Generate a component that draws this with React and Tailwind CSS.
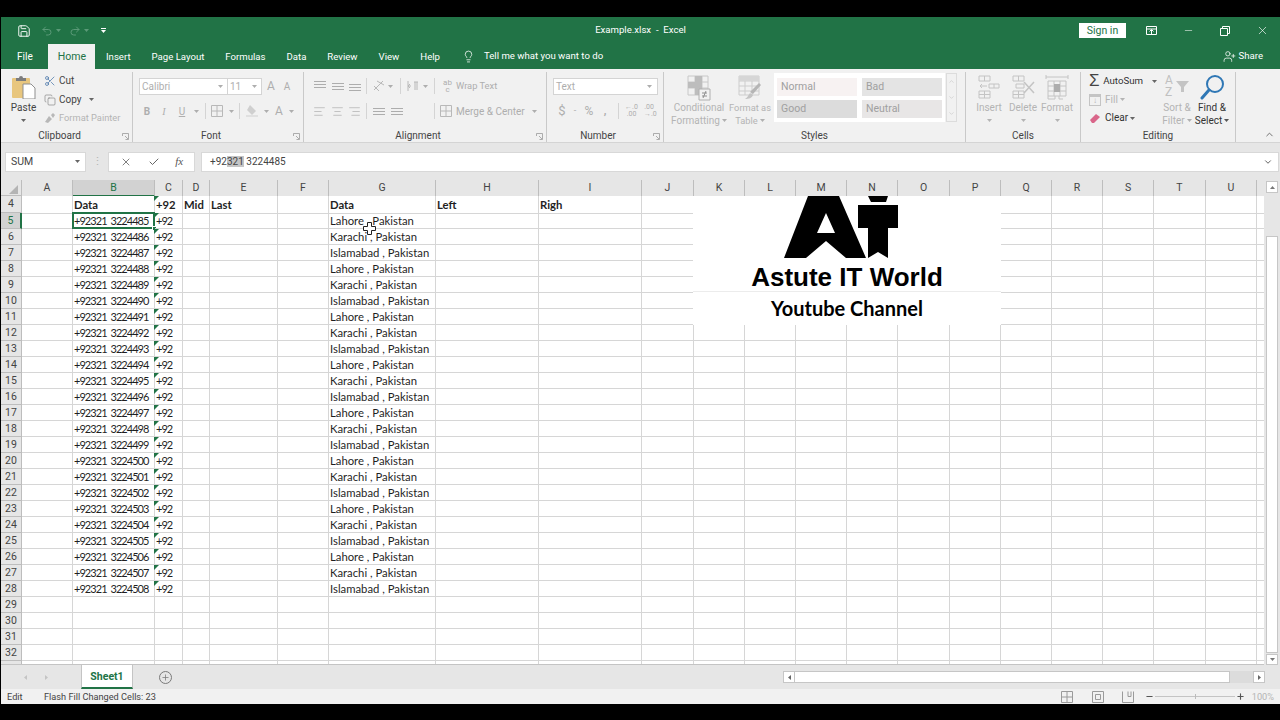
import React from "react";
import {
  AlignCenter, AlignLeft, AlignRight, ChevronDown, ChevronUp, Copy, Minus, Plus, Save, Scissors,
  Undo2, Redo2, X, Check, Lightbulb, UserPlus,
} from "lucide-react";

const UI = "font-['Roboto','Noto_Sans',sans-serif]";
const CELL = "font-['Lato','Open_Sans',sans-serif]";

const columns = ["A", "B", "C", "D", "E", "F", "G", "H", "I", "J", "K", "L", "M", "N", "O", "P", "Q", "R", "S", "T", "U"];
const gridTemplate = "grid grid-cols-[51px_82px_28px_27px_68px_51px_107px_103px_103px_52px_51px_51px_51px_51px_52px_51px_51px_51px_51px_52px_51px_8px]";
const cities = ["Lahore , Pakistan", "Karachi , Pakistan", "Islamabad , Pakistan"];

const Caret = ({ className = "" }) => (
  <svg width="5" height="3" viewBox="0 0 5 3" className={"shrink-0 fill-current " + className}><path d="M0 0h5L2.500 3z" /></svg>
);

const Launcher = () => (
  <svg width="7" height="7" viewBox="0 0 7 7" className="absolute right-[3px] bottom-[2px] stroke-[#9a9a9a] fill-none">
    <path d="M.5 3V.5H6.500V6.500H3.500M3 3l3 3" strokeWidth="0.8" />
  </svg>
);

const Group = ({ label, width, children, launcher }) => (
  <div style={{ width }} className="relative h-full shrink-0 border-r border-[#c9c9c9] flex flex-col">
    <div className="h-[58px] flex">{children}</div>
    <div className={"h-[12px] text-center text-[10px] leading-[12px] text-[#444] " + (launcher ? "pr-[14px]" : "")}>{label}</div>
    {launcher && <Launcher />}
  </div>
);

const GridIcon = ({ className = "" }) => (
  <svg width="12" height="12" viewBox="0 0 12 12" className={"shrink-0 fill-none stroke-[#b8b8b8] " + className}>
    <path d="M.5.5h11v11H.5zM6 .5v11M.5 6h11" />
  </svg>
);

const Lines = ({ widths, className = "" }) => (
  <div className={"flex flex-col gap-[2px] items-center w-[13px] shrink-0 " + className}>
    {widths.map((w, i) => <div key={i} style={{ width: w }} className="h-px bg-[#adadad]" />)}
  </div>
);

const Sep = ({ className = "" }) => <div className={"w-px h-[16px] shrink-0 bg-[#d4d4d4] " + className} />;

const StyleBox = ({ text, tone }) => (
  <div className={"w-[80px] h-[18px] pl-[4px] text-[10.5px] leading-[18px] text-[#a0a0a0] " + tone}>{text}</div>
);

const LargeLabel = ({ top, bottom, dark, caret, className = "text-[10px]" }) => (
  <div className={"text-center leading-[13px] whitespace-nowrap " + className + " " + (dark ? "text-[#333]" : "text-[#b4b4b4]")}>
    <div>{top}</div>
    <div className="flex items-center justify-center gap-[2px] h-[13px]">{bottom}{caret && <Caret className={dark ? "text-[#555]" : "text-[#b0b0b0]"} />}</div>
  </div>
);

const CondIcon = () => (
  <svg width="24" height="26" viewBox="0 0 24 26" className="fill-none stroke-[#c8c8c8]">
    <path d="M1 1h20v19H1zM1 7h20M1 13h20M8 1v19M15 1v19" />
    <path d="M8 1h7v6H8zM1 7h7v6H1zM8 7h7v13H8z" fill="#bdbdbd" stroke="none" />
    <path d="M12 14h11v11H12z" fill="#f1f1f1" stroke="#b0b0b0" />
    <path d="M15 18h5M15 21h5M19 16l-3 7" stroke="#8f8f8f" />
  </svg>
);

const TableIcon = () => (
  <svg width="24" height="26" viewBox="0 0 24 26" className="fill-none stroke-[#cdcdcd]">
    <path d="M1 1h20v19H1zM1 6h20M1 11h20M1 16h20M7 1v19M14 1v19" />
    <path d="M1 1h20v5H1z" fill="#d6d6d6" stroke="none" />
    <path d="M21 8l2 2-8 9-3-2z" fill="#b5b5b5" stroke="none" />
    <path d="M12 18l3 2c-1 3-4 4-8 4 2-1 3-3 5-6z" fill="#c4c4c4" stroke="none" />
  </svg>
);

const InsertIcon = () => (
  <svg width="24" height="26" viewBox="0 0 24 26" className="fill-none stroke-[#c4c4c4]">
    <path d="M2 2h11v5H2zM7.500 2v5M2 17h11v7H2zM7.500 17v7M2 20.500h11M12 10h10v4H12zM17 10v4M10 12H3M5 10l-2 2 2 2" />
  </svg>
);

const DeleteIcon = () => (
  <svg width="24" height="26" viewBox="0 0 24 26" className="fill-none stroke-[#c4c4c4]">
    <path d="M2 2h11v5H2zM7.500 2v5M2 17h11v7H2zM7.500 17v7M2 20.500h11M5 10h8v4H5z" />
    <path d="M13 8l10 11M23 8L13 19" strokeWidth="1.500" />
  </svg>
);

const FormatIcon = () => (
  <svg width="24" height="26" viewBox="0 0 24 26" className="fill-none stroke-[#c4c4c4]">
    <path d="M1 3h22M1 1v4M23 1v4M3 7h18v15H3zM3 12h18M3 17h18M9 7v15M15 7v15" />
    <path d="M9 10h6v8H9z" fill="#adadad" stroke="none" />
    <path d="M3 22v3h7v-3M14 22v3h4" />
  </svg>
);

const cellIcons = { Insert: <InsertIcon />, Delete: <DeleteIcon />, Format: <FormatIcon /> };

const Ribbon = () => (
  <div className={"h-[74px] bg-[#f1f1f1] border-b border-[#d4d4d4] flex pt-[3px] " + UI}>
    <Group label="Clipboard" width={132} launcher>
      <div className="w-[43px] pl-[2px] flex flex-col items-center pt-[3px]">
        <svg width="25" height="24" viewBox="0 0 25 24">
          <rect x="1" y="3" width="18" height="20" rx="1" fill="#e8c67e" />
          <path d="M8 3a2 2 0 0 1 4 0h3v3H5V3z" fill="#7d7d7d" />
          <path d="M12 9h8l4 4v11H12z" fill="#fff" stroke="#8f8f8f" />
        </svg>
        <div className="text-[10px] leading-[13px] mt-[2px] text-[#444]">Paste</div>
        <Caret className="text-[#666] mt-[5px]" />
      </div>
      <div className="flex flex-col gap-[2.500px] pt-[1px] text-[10px] leading-[16px] text-[#444]">
        <div className="flex items-center gap-[3px] h-[16px]"><Scissors size={12} strokeWidth={1.4} className="text-[#3f6fa5]" />Cut</div>
        <div className="flex items-center gap-[3px] h-[16px]"><Copy size={12} strokeWidth={1.2} className="text-[#777]" />Copy<Caret className="ml-[4px] text-[#666]" /></div>
        <div className="flex items-center gap-[3px] h-[16px] text-[9.3px] text-[#b4b4b4]">
          <svg width="12" height="12" viewBox="0 0 12 12"><path d="M1 10l4-6 3 3-4 4zM7 3l2-2 2 2-2 3z" fill="#b8b8b8" /></svg>
          Format Painter
        </div>
      </div>
    </Group>
    <Group label="Font" width={171} launcher>
      <div className="pl-[6px] pt-[6px] flex flex-col gap-[7px] text-[#aeaeae]">
        <div className="flex items-center">
          <div className="w-[89px] h-[17px] bg-white border border-[#d4d4d4] flex items-center justify-between px-[2px] text-[10px]">Calibri<Caret className="mr-[2px]" /></div>
          <div className="w-[35px] h-[17px] -ml-px bg-white border border-[#d4d4d4] flex items-center justify-between px-[2px] text-[10px]">11<Caret className="mr-[2px]" /></div>
          <div className="ml-[5px] text-[12px] leading-[17px]">A</div>
          <div className="ml-[9px] text-[10px] leading-[17px]">A</div>
        </div>
        <div className="flex items-center text-[10px] h-[18px] text-center">
          <span className="w-[16px] font-bold">B</span>
          <span className="w-[18px] italic font-['Liberation_Serif',serif]">I</span>
          <span className="w-[18px] underline">U</span>
          <span className="w-[10px] flex justify-center"><Caret /></span>
          <Sep className="ml-[4px]" />
          <span className="w-[22px] flex justify-center"><GridIcon /></span>
          <span className="w-[6px] flex justify-center"><Caret /></span>
          <Sep className="ml-[5px]" />
          <span className="w-[24px] flex justify-center">
            <svg width="14" height="14" viewBox="0 0 14 14"><path d="M5 1l6 6-4 4-5-5z" fill="#cfcfcf" /><rect x="1" y="11" width="12" height="2" fill="#e0e0e0" /></svg>
          </span>
          <Caret />
          <span className="w-[20px] text-[12px]">A</span>
          <Caret />
        </div>
      </div>
    </Group>
    <Group label="Alignment" width={243} launcher>
      <div className="pl-[9px] pt-[6px] flex flex-col gap-[9px] text-[#aeaeae]">
        <div className="flex items-center h-[16px] text-[10px]">
          <Lines widths={[12, 12, 12]} className="-mt-[3px]" />
          <Lines widths={[12, 12, 12]} className="ml-[5px]" />
          <Lines widths={[12, 12, 12]} className="ml-[4px] mt-[3px]" />
          <Sep className="ml-[5px]" />
          <svg width="14" height="14" viewBox="0 0 14 14" className="ml-[5px] shrink-0 fill-none stroke-[#b8b8b8]"><path d="M2 11L11 2M5 2l7 4M2 7l5 5" /></svg>
          <Caret className="ml-[2px]" />
          <Sep className="ml-[7px]" />
          <svg width="12" height="10" viewBox="0 0 12 10" className="ml-[6px] shrink-0 fill-none stroke-[#b8b8b8]"><path d="M1 0v10M4 5h-3M3 3L1 5l2 2M7 1h4M8 1v8M10 1v8" /></svg>
          <Caret className="ml-[4px]" />
          <Sep className="ml-[6px]" />
          <span className="ml-[7px] w-[11px] text-[8px] leading-[7px] text-center">ab<br />c</span>
          <span className="ml-[3px] text-[9.3px]">Wrap Text</span>
        </div>
        <div className="flex items-center h-[16px] text-[10px]">
          <div className="w-[13px] flex justify-center"><AlignLeft size={13} strokeWidth={1.3} /></div>
          <div className="w-[13px] flex justify-center ml-[5px]"><AlignCenter size={13} strokeWidth={1.3} /></div>
          <div className="w-[13px] flex justify-center ml-[4px]"><AlignRight size={13} strokeWidth={1.3} /></div>
          <Sep className="ml-[5px]" />
          <Lines widths={[12, 12, 12]} className="ml-[5px]" />
          <Lines widths={[12, 12, 12]} className="ml-[5px]" />
          <Sep className="ml-[31px]" />
          <GridIcon className="ml-[5px]" />
          <span className="ml-[4px]">Merge &amp; Center</span>
          <Caret className="ml-[7px]" />
        </div>
      </div>
    </Group>
    <Group label="Number" width={117} launcher>
      <div className="pl-[6px] pt-[6px] flex flex-col gap-[7px] text-[#aeaeae]">
        <div className="w-[105px] h-[17px] bg-white border border-[#d4d4d4] flex items-center justify-between px-[2px] text-[10px]">Text<Caret className="mr-[3px]" /></div>
        <div className="flex items-center h-[18px] text-center">
          <span className="w-[18px] text-[13px]">$</span>
          <span className="w-[8px] text-[9px]">-</span>
          <span className="w-[20px] text-[12px]">%</span>
          <span className="w-[12px] text-[11px] font-bold">,</span>
          <Sep className="ml-[7px]" />
          <span className="w-[25px] text-[7px] leading-[7px]">←.0<br />.00</span>
          <span className="w-[10px] text-[7px] leading-[7px]">.00<br />→.0</span>
        </div>
      </div>
    </Group>
    <Group label="Styles" width={302}>
      <div className="w-[50px] ml-[10px] pt-[3px] flex flex-col items-center">
        <div className="h-[26px] mb-[0px]"><CondIcon /></div>
        <LargeLabel top="Conditional" bottom="Formatting" caret />
      </div>
      <div className="w-[46px] ml-[3px] pt-[3px] flex flex-col items-center">
        <div className="h-[26px] mb-[0px]"><TableIcon /></div>
        <LargeLabel top="Format as" bottom="Table" caret className="text-[9.3px]" />
      </div>
      <div className="w-[171px] h-[49px] ml-[1px] mt-[1px] bg-white grid grid-cols-[85px_85px] gap-y-[4px] pt-[5px] pl-[3px] content-start">
        <StyleBox text="Normal" tone="bg-[#f7f2f2]" />
        <StyleBox text="Bad" tone="bg-[#e4e4e4]" />
        <StyleBox text="Good" tone="bg-[#dcdcdc]" />
        <StyleBox text="Neutral" tone="bg-[#e8e6e6]" />
      </div>
      <div className="w-[11px] h-[49px] ml-[1px] mt-[1px] border border-[#dcdcdc] flex flex-col justify-around items-center text-[#c4c4c4]">
        <ChevronUp size={7} /><ChevronDown size={7} /><ChevronDown size={7} />
      </div>
    </Group>
    <Group label="Cells" width={115}>
      <div className="w-[6px]" />
      {["Insert", "Delete", "Format"].map((name) => (
        <div key={name} className="w-[34px] flex flex-col items-center pt-[2px] text-[10px] leading-[13px] text-[#b4b4b4]">
          <div className="h-[26px] mb-[1px]">{cellIcons[name]}</div>
          <div>{name}</div>
          <Caret className="mt-[5px]" />
        </div>
      ))}
    </Group>
    <Group label="Editing" width={155}>
      <div className="w-[76px] pl-[8px] pt-[1px] flex flex-col gap-[2.500px] text-[10px] leading-[16px]">
        <div className="flex items-center h-[16px] text-[9.7px] text-[#333]">
          <span className="w-[16px] text-[17px] leading-[16px] text-[#444] font-['Liberation_Sans',sans-serif]">Σ</span>
          AutoSum<Caret className="ml-[9px] text-[#666]" />
        </div>
        <div className="flex items-center h-[16px] text-[#b4b4b4]">
          <span className="w-[12px] h-[12px] mr-[4px] border border-[#c4c4c4] border-t-[3px] text-[8px] leading-[8px] text-center">↓</span>
          Fill<Caret className="ml-[2px]" />
        </div>
        <div className="flex items-center h-[16px] text-[#333]">
          <svg width="12" height="12" viewBox="0 0 12 12" className="mr-[4px]"><path d="M1 8l6-6 4 3-6 6H3z" fill="#d9668a" /></svg>
          Clear<Caret className="ml-[2px] text-[#666]" />
        </div>
      </div>
      <div className="w-[40px] flex flex-col items-center pt-[2px]">
        <div className="h-[26px] mb-[1px] text-[12px] leading-[12px] text-[#c0c0c0] relative w-[24px]">
          <div>A</div><div>Z</div>
          <svg width="13" height="12" viewBox="0 0 13 12" className="absolute right-0 top-[7px]"><path d="M0 0h13L8 6v5H5V6z" fill="#c4c4c4" /></svg>
        </div>
        <LargeLabel top="Sort &" bottom="Filter" caret />
      </div>
      <div className="w-[30px] flex flex-col items-center pt-[2px]">
        <svg width="26" height="26" viewBox="0 0 26 26" className="h-[26px] mb-[1px] shrink-0 fill-none stroke-[#2f77b5]">
          <circle cx="16" cy="10" r="8" strokeWidth="2" />
          <path d="M10 16l-7 8" strokeWidth="3" strokeLinecap="round" />
        </svg>
        <LargeLabel top="Find &" bottom="Select" dark caret />
      </div>
    </Group>
    <div className="flex-1 flex items-end justify-end pr-[5px] pb-[2px] text-[#666]"><ChevronUp size={11} /></div>
  </div>
);

const FormulaBar = () => (
  <div className={"h-[37px] bg-[#e6e6e6] flex items-center gap-[6px] pl-[4px] pr-[1px] text-[10.5px] text-[#444] " + UI}>
    <div className="w-[81px] h-[20px] bg-white border border-[#d8d8d8] flex items-center justify-between px-[5px]">
      SUM<Caret className="text-[#666]" />
    </div>
    <div className="w-[10px] text-center text-[#b5b5b5] leading-[10px]">⋮</div>
    <div className="w-[87px] h-[20px] bg-white border border-[#d8d8d8] flex items-center justify-around text-[#555] px-[3px]">
      <X size={12} strokeWidth={1.5} />
      <Check size={12} strokeWidth={1.8} />
      <span className="italic text-[11px] font-['Liberation_Serif',serif]">fx</span>
    </div>
    <div className="flex-1 h-[20px] bg-white border border-[#d8d8d8] flex items-center justify-between pl-[8px] pr-[5px]">
      <div className="text-[10px]">+92<span className="bg-[#c5c5c5]">321</span> 3224485</div>
      <ChevronDown size={10} />
    </div>
  </div>
);

const ColumnHeaders = () => (
  <div className="flex h-[16px] bg-[#e6e6e6] text-[10.5px] leading-[15px] text-[#444]">
    <div className="w-[21px] shrink-0 border-r border-b border-[#bdbdbd] relative">
      <svg width="9" height="9" viewBox="0 0 9 9" className="absolute right-[3px] bottom-[1px]"><path d="M9 0v9H0z" fill="#b4b4b4" /></svg>
    </div>
    <div className={gridTemplate + " flex-1"}>
      {columns.map((name) => (
        <div key={name} className={name === "B"
          ? "text-center bg-[#d2d2d2] text-[#217346] border-r border-[#bdbdbd] border-b-2 border-b-[#217346]"
          : "text-center border-r border-[#bdbdbd] border-b border-b-[#a8a8a8]"}>{name}</div>
      ))}
      <div className="border-b border-b-[#a8a8a8]" />
    </div>
  </div>
);

const Tick = () => (
  <svg width="5" height="5" viewBox="0 0 5 5" className="absolute -left-px top-0"><path d="M0 0h5L0 5z" fill="#217346" /></svg>
);

const Row = ({ num }) => {
  const idx = num - 5;
  const hasData = num >= 5 && num <= 28;
  const isHeader = num === 4;
  const selected = num === 5;
  return (
    <div className={"flex " + (isHeader ? "h-[17px]" : "h-[16px]")}>
      <div className={"w-[21px] shrink-0 text-center text-[10.5px] border-r border-b " + (isHeader ? "leading-[16px] " : "leading-[15px] ") + (selected
        ? "bg-[#d2d2d2] text-[#217346] border-b-[#bdbdbd] border-r-2 border-r-[#217346]"
        : "bg-[#e6e6e6] text-[#444] border-[#bdbdbd]") + " " + UI}>{num < 33 ? num : ""}</div>
      <div className={gridTemplate + " flex-1 text-[11.3px] text-[#1f1f1f] " + (isHeader ? "leading-[17px] " : "leading-[15px] ") + CELL}>
        {columns.map((name) => {
          let text = "";
          let tick = false;
          let numeric = false;
          if (isHeader) {
            text = { B: "Data", C: "+92", D: "Mid", E: "Last", G: "Data", H: "Left", I: "Righ" }[name] || "";
            tick = name === "C";
          } else if (hasData) {
            if (name === "B") { text = "+92321 " + (3224485 + idx); numeric = true; }
            if (name === "C") { text = "+92"; tick = true; numeric = true; }
            if (name === "G") text = cities[idx % 3];
          }
          return (
            <div key={name} className={"relative border-r border-b border-[#d6d6d6] pl-[1px] whitespace-nowrap "
              + (isHeader ? "font-bold " : "") + (numeric ? "text-[11px] tracking-[-0.95px] [word-spacing:2px]" : "")}>
              {tick && <Tick />}
              {text}
              {selected && name === "B" && (
                <div className="absolute -left-px -top-px right-[-1px] bottom-[-1px] border-2 border-[#217346] pointer-events-none">
                  <div className="absolute right-[-4px] bottom-[-4px] w-[5px] h-[5px] bg-[#217346] border border-white" />
                </div>
              )}
            </div>
          );
        })}
        <div className="border-b border-[#d6d6d6]" />
      </div>
    </div>
  );
};

const LogoOverlay = () => (
  <div className="absolute left-[692px] top-0 w-[308px] h-[129px] bg-white flex flex-col items-center text-black">
    <svg width="116" height="62" viewBox="0 0 116 62" className="shrink-0 ml-[-11px]">
      <path d="M24 0h31l27 62H62L42 45 22 62H0zM33 37h18l-9-20z" fillRule="evenodd" />
      <path d="M84 0h20l-2 6H87zM74 9h40v23h-10v30l-10-6-10 6V32H74z" />
    </svg>
    <div className="w-full h-[34px] border-b border-[#ececec] pt-[4px] text-center text-[26px] leading-[30px] font-bold font-['Liberation_Sans',sans-serif]">Astute IT World</div>
    <div className="w-full h-[33px] text-center text-[20px] leading-[33px] font-bold font-['Lato',sans-serif]">Youtube Channel</div>
  </div>
);

const Scrollbar = () => (
  <div className="w-[16px] shrink-0 bg-[#e6e6e6] flex flex-col items-center pt-[1px] text-[#777]">
    <div className="w-[12px] h-[12px] bg-white border border-[#c6c6c6] flex items-center justify-center"><Caret className="rotate-180" /></div>
    <div className="w-[12px] flex-1">
      <div className="h-[43px]" />
      <div className="h-[417px] bg-white border border-[#c6c6c6]" />
    </div>
    <div className="w-[12px] h-[11px] bg-white border border-[#c6c6c6] flex items-center justify-center"><Caret /></div>
  </div>
);

const Sheet = () => {
  const rows = [];
  for (let n = 4; n <= 33; n++) rows.push(n);
  return (
    <div className="flex h-[485px] bg-[#e6e6e6]">
      <div className={"flex-1 flex flex-col min-w-0 overflow-hidden border-b border-[#c4c4c4] " + UI}>
        <ColumnHeaders />
        <div className="relative bg-white flex-1 overflow-hidden">
          {rows.map((n) => <Row key={n} num={n} />)}
          <LogoOverlay />
          <svg width="13" height="13" viewBox="0 0 13 13" className="absolute left-[362px] top-[26px]">
            <path d="M4.500.5h4v4h4v4h-4v4h-4v-4h-4v-4h4z" fill="#fff" stroke="#222" />
          </svg>
        </div>
      </div>
      <Scrollbar />
    </div>
  );
};

const BottomBars = () => (
  <div className={UI}>
    <div className="h-[24px] bg-[#e6e6e6] flex items-center">
      <div className="w-[80px] flex gap-[16px] pl-[22px] text-[#c4c4c4]"><Caret className="rotate-90" /><Caret className="-rotate-90" /></div>
      <div className="w-[52px] h-[24px] bg-white border-x border-b-2 border-x-[#c4c4c4] border-b-[#217346] text-center text-[10.5px] font-bold leading-[23px] text-[#217346]">Sheet1</div>
      <div className="ml-[26px] w-[13px] h-[13px] rounded-full border border-[#7a7a7a] flex items-center justify-center text-[#7a7a7a]"><Plus size={9} /></div>
      <div className="flex-1" />
      <div className="w-[482px] h-[12px] mr-[15px] flex items-stretch text-[#666]">
        <div className="w-[12px] bg-white border border-[#c6c6c6] flex items-center justify-center"><Caret className="rotate-90" /></div>
        <div className="w-[435px] bg-white border-y border-r border-[#c6c6c6]" />
        <div className="flex-1 bg-[#dcdcdc]" />
        <div className="w-[12px] bg-white border border-[#c6c6c6] flex items-center justify-center"><Caret className="-rotate-90" /></div>
      </div>
    </div>
    <div className="h-[15px] bg-[#f1f1f1] flex items-center text-[9.2px] leading-[15px] text-[#444] pl-[6px] pr-[6px]">
      <div className="w-[37px]">Edit</div>
      <div>Flash Fill Changed Cells: 23</div>
      <div className="flex-1" />
      <div className="flex items-center text-[#9a9a9a]">
        <GridIcon className="!stroke-[#9a9a9a]" />
        <svg width="12" height="12" viewBox="0 0 12 12" className="ml-[19px] fill-none stroke-[#9a9a9a]"><path d="M.5.5h11v11H.5zM3.500 3.500h5v5h-5z" /></svg>
        <svg width="12" height="12" viewBox="0 0 12 12" className="ml-[18px] fill-none stroke-[#9a9a9a]"><path d="M.5.5v11h11V.5M6 .5v5h3V.5" /></svg>
        <Minus size={9} strokeWidth={3} className="ml-[11px] text-[#555]" />
        <div className="w-[80px] h-px bg-[#c4c4c4] mx-[1px] relative"><div className="absolute left-[40px] -top-[2px] w-px h-[5px] bg-[#bbb]" /></div>
        <Plus size={9} strokeWidth={3} className="text-[#555]" />
        <div className="w-[29px] text-right text-[#b4b4b4]">100%</div>
      </div>
    </div>
  </div>
);

export default function App() {
  return (
    <div className="w-[1280px] h-[720px] bg-black pt-[17px] pl-[1px] overflow-hidden">
      <div className="h-[687px] bg-[#e6e6e6] flex flex-col">
        <div className={"h-[27px] bg-[#217346] relative flex items-center text-white " + UI}>
          <div className="flex items-center pl-[16px]">
            <Save size={14} strokeWidth={1.6} />
            <Undo2 size={12} className="ml-[10px] text-[#5b9a78]" />
            <Caret className="ml-[3px] text-[#5b9a78]" />
            <Redo2 size={12} className="ml-[8px] text-[#5b9a78]" />
            <Caret className="ml-[3px] text-[#5b9a78]" />
            <div className="ml-[12px] flex flex-col items-center gap-[1px]"><div className="w-[5px] h-px bg-white" /><Caret className="text-white" /></div>
          </div>
          <div className="absolute left-0 right-0 text-center text-[9.6px] whitespace-pre pointer-events-none">Example.xlsx  -  Excel</div>
          <div className="flex-1" />
          <div className="w-[47px] h-[15px] bg-white text-[#217346] text-center text-[10.5px] leading-[15px]">Sign in</div>
          <svg width="11" height="9" viewBox="0 0 11 9" className="ml-[20px] fill-none stroke-white"><path d="M.5.5h10v8H.5zM.5 3h10M5.500 8V4M3.500 5.500l2-2 2 2" /></svg>
          <Minus size={11} strokeWidth={1.2} className="ml-[26px]" />
          <svg width="10" height="10" viewBox="0 0 10 10" className="ml-[26px] fill-none stroke-white"><path d="M.5 2.500h7v7h-7zM2.500 2.500v-2h7v7h-2" /></svg>
          <X size={13} strokeWidth={1.2} className="ml-[26px] mr-[11px]" />
        </div>
        <div className={"h-[25px] bg-[#217346] flex items-end text-[9.6px] text-white " + UI}>
          <div className="w-[47px] h-[25px] pl-[16px] leading-[25px] text-[10px]">File</div>
          <div className="w-[47px] h-[25px] bg-[#f1f1f1] text-[#217346] text-center text-[10.5px] leading-[25px] pl-[1px]">Home</div>
          <div className="h-[25px] leading-[25px] flex gap-[21px] pl-[11px]">
            <span>Insert</span><span>Page Layout</span><span>Formulas</span><span>Data</span><span>Review</span><span>View</span><span>Help</span>
          </div>
          <div className="h-[25px] flex items-center gap-[9px] pl-[22px]"><Lightbulb size={13} strokeWidth={1.4} />Tell me what you want to do</div>
          <div className="flex-1" />
          <div className="h-[25px] flex items-center gap-[3px] pr-[17px]"><UserPlus size={13} strokeWidth={1.4} />Share</div>
        </div>
        <Ribbon />
        <FormulaBar />
        <Sheet />
        <BottomBars />
      </div>
    </div>
  );
}
